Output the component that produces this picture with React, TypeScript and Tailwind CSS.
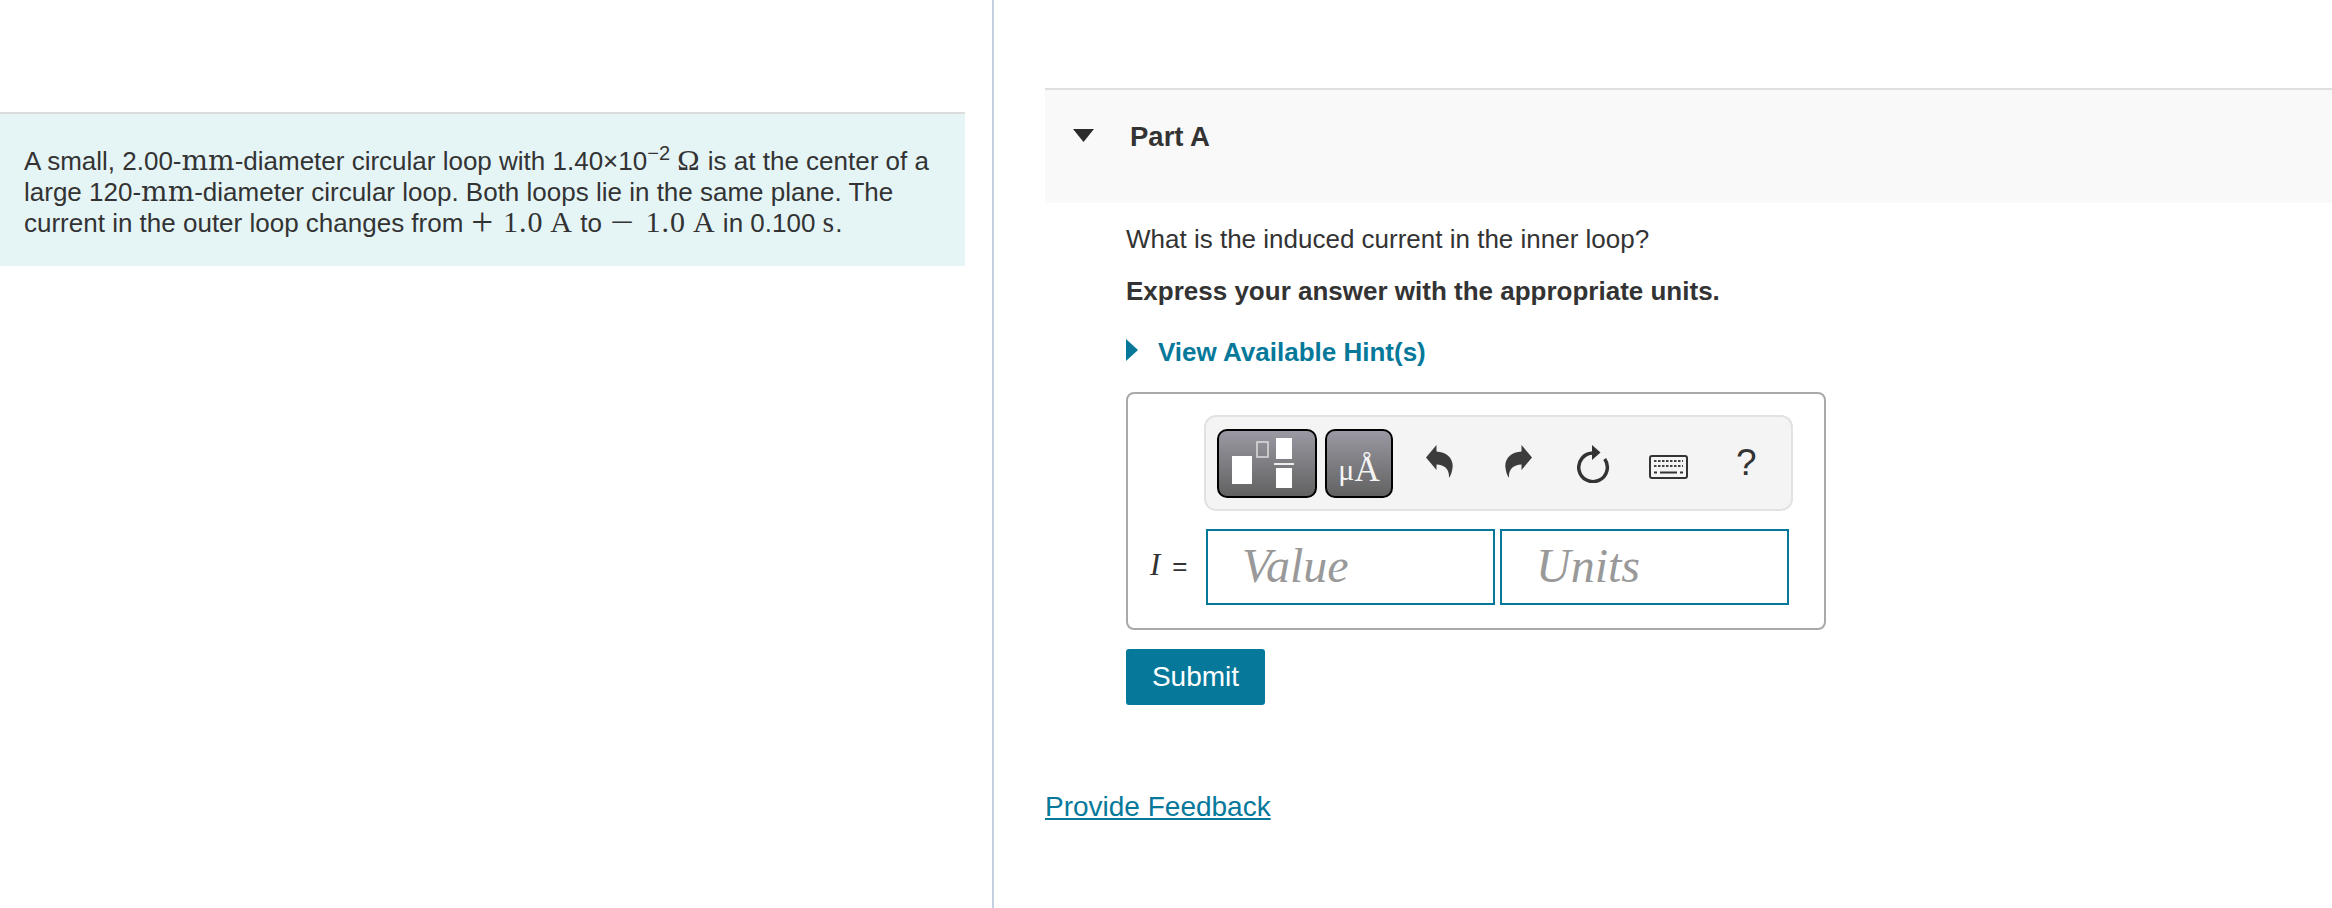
import React from 'react';

const Math_: React.FC<{ children: React.ReactNode }> = ({ children }) => (
  <span className="font-['Liberation_Serif',serif] text-[30px] leading-[0] tracking-[1px]">{children}</span>
);

// mm is set in a wider face, the way the original math font draws it
const Unit: React.FC<{ children: React.ReactNode }> = ({ children }) => (
  <span className="font-['DejaVu_Serif',serif] text-[28px] leading-[0]">{children}</span>
);

const TemplatesIcon = () => (
  <svg width="96" height="65" viewBox="0 0 96 65" className="block">
    <rect x="13" y="25" width="20" height="28" fill="#fff" />
    <rect x="38" y="11" width="11" height="15" fill="none" stroke="#ddd" strokeWidth="1.5" />
    <rect x="57" y="7" width="16" height="21" fill="#fff" />
    <rect x="55" y="32" width="20" height="2" fill="#eee" />
    <rect x="57" y="37" width="16" height="20" fill="#fff" />
  </svg>
);

const UndoIcon = ({ flip }: { flip?: boolean }) => (
  <svg width="27" height="33" viewBox="0 0 27 33" className={flip ? '-scale-x-100' : ''}>
    <path d="M0 12.5 L10.5 0 V6.5 C21 7 28 14 26.5 23 C26 27 25 30 23 33 C23.5 24 19 20 10.5 19.5 V25 Z" fill="#3c3c3c" />
  </svg>
);

const ResetIcon = () => (
  <svg width="34" height="38" viewBox="0 0 34 38">
    <path d="M16 8 A14.3 14.3 0 1 0 27.7 14" fill="none" stroke="#333" strokeWidth="3.5" />
    <path d="M15 0 L23.5 7.5 L15 15 Z" fill="#333" />
  </svg>
);

const KeyboardIcon = () => (
  <svg width="39" height="24" viewBox="0 0 39 24">
    <rect x="1" y="1" width="37" height="22" rx="2" fill="#f4f4f4" stroke="#333" strokeWidth="2" />
    <path d="M5 6h29M5 11h29" stroke="#444" strokeWidth="2" strokeDasharray="2.5 1.5" fill="none" />
    <path d="M5 17.5h3M11 17.5h17M31 17.5h3" stroke="#333" strokeWidth="2" fill="none" />
  </svg>
);

const Toolbar = () => (
  <div className="flex h-[96px] w-[589px] items-center rounded-[12px] border-2 border-[#e2e2e2] bg-[#f4f4f4] pl-[11px]">
    <button className="h-[69px] w-[100px] rounded-[10px] border-2 border-black bg-linear-to-b from-[#9b99a3] to-[#626262]">
      <TemplatesIcon />
    </button>
    <button className="ml-[8px] flex h-[69px] w-[68px] items-end justify-center rounded-[10px] border-2 border-black bg-linear-to-b from-[#9b99a3] to-[#626262] pb-[1px] font-['Liberation_Serif',serif] text-[35px] leading-[50px] text-[#f4f4f4]">
      <span className="text-[30px]">μ</span>Å
    </button>
    <div className="ml-[33px] mt-[-3px] flex w-[27px]">
      <UndoIcon />
    </div>
    <div className="ml-[52px] mt-[-3px] flex w-[27px]">
      <UndoIcon flip />
    </div>
    <div className="ml-[45px] mt-[2px] flex w-[34px]">
      <ResetIcon />
    </div>
    <div className="ml-[38px] mt-[7px] flex w-[39px]">
      <KeyboardIcon />
    </div>
    <span className="ml-[48px] mt-[-2px] text-[37px] font-light leading-none text-[#333]">?</span>
  </div>
);

const AnswerBox = () => (
  <div className="mt-[25px] h-[238px] w-[700px] rounded-[8px] border-2 border-[#a9a9a9] bg-white pl-[76px] pt-[21px]">
    <Toolbar />
    <div className="relative mt-[18px] flex gap-[5px] pl-[2px]">
      <span className="absolute left-[-54px] top-[21px] flex items-baseline gap-[12px] text-[26px] leading-[30px] text-[#333]">
        <i className="font-['Liberation_Serif',serif] text-[31px]">I</i>
        <span>=</span>
      </span>
      <input
        placeholder="Value"
        className="h-[76px] w-[289px] border-2 border-[#06799b] pb-[3px] pl-[34px] font-['Liberation_Serif',serif] text-[48px] italic outline-none placeholder:text-[#999]"
      />
      <input
        placeholder="Units"
        className="h-[76px] w-[289px] border-2 border-[#06799b] pb-[3px] pl-[34px] font-['Liberation_Serif',serif] text-[48px] italic outline-none placeholder:text-[#999]"
      />
    </div>
  </div>
);

const App: React.FC = () => {
  return (
    <div className="flex h-[908px] w-[2332px] overflow-hidden bg-white font-['Liberation_Sans',Arial,sans-serif] text-[#333]">
      <div className="h-full w-[994px] shrink-0 border-r-2 border-[#c3d0e2] pt-[112px]">
        <div className="h-[154px] w-[965px] border-t-2 border-[#dcdcdc] bg-[#e5f5f6] pl-[24px] pt-[32px] text-[26px] leading-[31px]">
          A small, 2.00-<Unit>mm</Unit>-diameter circular loop with 1.40×10<sup className="text-[20px] leading-[0]">−2</sup> <Math_>Ω</Math_> is at
          the center of a<br />
          large 120-<Unit>mm</Unit>-diameter circular loop. Both loops lie in the same plane. The<br />
          current in the outer loop changes from{' '}
          <Math_><span className="mx-[3px] inline-block scale-[1.3]">+</span> 1.0 A</Math_> to{' '}
          <Math_><span className="mx-[5px] inline-block scale-x-[1.4]">−</span> 1.0 A</Math_> in 0.100 <Math_>s</Math_>.
        </div>
      </div>

      <div className="min-w-0 flex-1 pl-[51px] pt-[88px]">
        <div className="flex h-[115px] items-start border-t-2 border-[#dfdfdf] bg-[#f9f9f9] pl-[28px] pt-[31px]">
          <svg width="21" height="13" viewBox="0 0 21 13" className="mt-[8px]">
            <path d="M0 0H21L10.5 13Z" fill="#2b2b2b" />
          </svg>
          <span className="ml-[36px] text-[27.5px] font-bold leading-[32px]">Part A</span>
        </div>

        <div className="pl-[81px]">
          <p className="mt-[21px] text-[26px] leading-[30px]">What is the induced current in the inner loop?</p>
          <p className="mt-[22px] text-[26px] font-bold leading-[30px]">Express your answer with the appropriate units.</p>
          <div className="mt-[31px] flex items-center text-[26px] font-bold leading-[30px] text-[#06799b]">
            <svg width="12" height="22" viewBox="0 0 12 22" className="mt-[-4px]">
              <path d="M0 0L12 11L0 22Z" fill="#06799b" />
            </svg>
            <span className="ml-[20px]">View Available Hint(s)</span>
          </div>
          <AnswerBox />
          <button className="mt-[19px] h-[56px] w-[139px] rounded-[3px] bg-[#06799b] text-[28px] text-white">Submit</button>
        </div>

        <a href="#" className="mt-[86px] block w-fit text-[28px] leading-[32px] text-[#06799b] underline">
          Provide Feedback
        </a>
      </div>
    </div>
  );
};

export default App;
